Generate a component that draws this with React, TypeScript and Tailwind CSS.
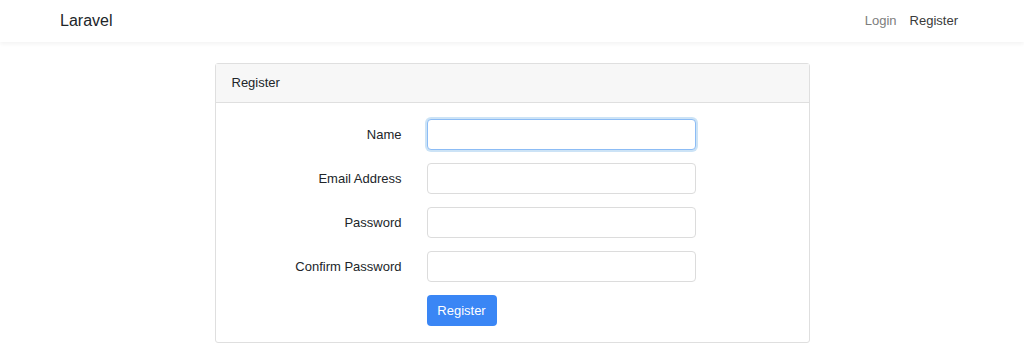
export default function App() {
  const fields = [
    { label: 'Name', type: 'text', focused: true },
    { label: 'Email Address', type: 'email', focused: false },
    { label: 'Password', type: 'password', focused: false },
    { label: 'Confirm Password', type: 'password', focused: false },
  ];

  return (
    <div className="min-h-screen bg-white text-[#212529] font-['Liberation_Sans',Arial,sans-serif] text-[13px]">
      <nav className="h-[42px] bg-white shadow-[0_2px_4px_rgba(0,0,0,0.05)] px-[60px] flex items-center justify-between">
        <a className="text-[16px] text-[#212529]">Laravel</a>
        <div className="flex items-center gap-[13px] pr-[6px]">
          <a className="text-[13px] text-[#7d7d7d]">Login</a>
          <a className="text-[13px] text-[#3a3a3a]">Register</a>
        </div>
      </nav>

      <main className="pt-[21px] flex justify-center">
        <div className="w-[595px] border border-[#dfdfdf] rounded-[3px] bg-white">
          <div className="h-[39px] bg-[#f7f7f7] border-b border-[#dfdfdf] px-[16px] flex items-center">
            Register
          </div>
          <div className="pt-[16px] pb-[16px] flex flex-col gap-[13px]">
            {fields.map(f => (
              <div key={f.label} className="flex items-center">
                <label className="w-[186px] text-right">{f.label}</label>
                <input
                  type={f.type}
                  className={
                    'ml-[25px] w-[269px] h-[31px] rounded-[4px] bg-white outline-none px-3 ' +
                    (f.focused
                      ? 'border border-[#8cbcf5] shadow-[0_0_0_2px_rgba(52,144,220,0.25)]'
                      : 'border border-[#dcdcdc]')
                  }
                />
              </div>
            ))}
            <div className="flex">
              <button className="ml-[211px] w-[70px] h-[31px] rounded-[4px] bg-[#3a86f5] text-white text-[13px]">
                Register
              </button>
            </div>
          </div>
        </div>
      </main>
    </div>
  );
}
